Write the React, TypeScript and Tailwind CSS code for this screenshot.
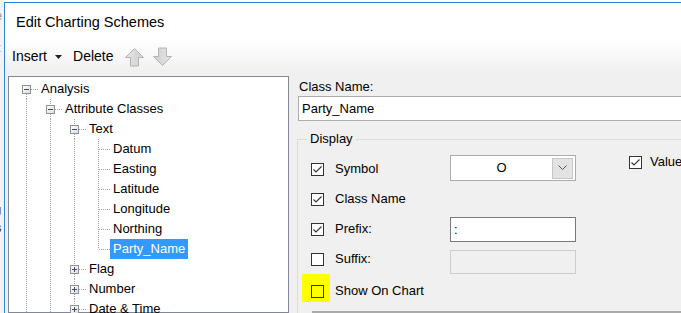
import React from 'react';

type Kind = 'minus' | 'plus' | 'leaf';

interface TreeRow {
  label: string;
  level: number;
  kind: Kind;
  top: boolean;
  bottom: boolean;
  selected?: boolean;
}

const rows: TreeRow[] = [
  { label: 'Analysis', level: 0, kind: 'minus', top: false, bottom: true },
  { label: 'Attribute Classes', level: 1, kind: 'minus', top: true, bottom: true },
  { label: 'Text', level: 2, kind: 'minus', top: true, bottom: true },
  { label: 'Datum', level: 3, kind: 'leaf', top: true, bottom: true },
  { label: 'Easting', level: 3, kind: 'leaf', top: true, bottom: true },
  { label: 'Latitude', level: 3, kind: 'leaf', top: true, bottom: true },
  { label: 'Longitude', level: 3, kind: 'leaf', top: true, bottom: true },
  { label: 'Northing', level: 3, kind: 'leaf', top: true, bottom: true },
  { label: 'Party_Name', level: 3, kind: 'leaf', top: true, bottom: false, selected: true },
  { label: 'Flag', level: 2, kind: 'plus', top: true, bottom: true },
  { label: 'Number', level: 2, kind: 'plus', top: true, bottom: true },
  { label: 'Date & Time', level: 2, kind: 'plus', top: true, bottom: true },
];

const DOT = '#a0a0a0';

// a 24x20 cell with the dotted connector lines of a tree row
function LineCell({ row, own }: { row?: TreeRow; own: boolean }) {
  if (!own) {
    return (
      <svg width="24" height="20" className="shrink-0">
        <line x1="12.5" y1="0" x2="12.5" y2="20" stroke={DOT} strokeDasharray="1 1" />
      </svg>
    );
  }
  const r = row!;
  const leaf = r.kind === 'leaf';
  return (
    <svg width="24" height="20" className="shrink-0">
      <defs>
        <linearGradient id="bx" x1="0" y1="0" x2="1" y2="1">
          <stop offset="0" stopColor="#ffffff" />
          <stop offset="1" stopColor="#dcdcdc" />
        </linearGradient>
      </defs>
      {r.top && (
        <line x1="12.5" y1="0" x2="12.5" y2={leaf ? 10 : 6} stroke={DOT} strokeDasharray="1 1" />
      )}
      {r.bottom && (
        <line x1="12.5" y1={leaf ? 10 : 15} x2="12.5" y2="20" stroke={DOT} strokeDasharray="1 1" />
      )}
      <line x1={leaf ? 13 : 17} y1="10.5" x2="24" y2="10.5" stroke={DOT} strokeDasharray="1 1" />
      {!leaf && (
        <>
          <rect x="8.5" y="6.5" width="8" height="8" fill="url(#bx)" stroke="#919191" />
          <line x1="10" y1="10.5" x2="15" y2="10.5" stroke="#3d4f6b" />
          {r.kind === 'plus' && <line x1="12.5" y1="8" x2="12.5" y2="13" stroke="#3d4f6b" />}
        </>
      )}
    </svg>
  );
}

function Tree() {
  return (
    <div className="w-[281px] shrink-0 border border-[#828790] bg-white pt-[2px] pl-[5px] text-[13px] leading-[20px]">
      {rows.map((r) => (
        <div key={r.label} className="flex h-[20px]">
          {Array.from({ length: r.level }).map((_, i) => (
            <LineCell key={i} own={false} />
          ))}
          <LineCell row={r} own />
          <span
            className={`px-[3px] whitespace-nowrap ${r.selected ? 'bg-[#3399ff] text-white' : 'text-black'}`}
          >
            {r.label}
          </span>
        </div>
      ))}
    </div>
  );
}

function CheckBox({ checked, clear }: { checked?: boolean; clear?: boolean }) {
  return (
    <span
      className={`w-[13px] h-[13px] shrink-0 border border-[#333333] flex items-center justify-center ${clear ? 'bg-transparent' : 'bg-white'}`}
    >
      {checked && (
        <svg width="11" height="11" viewBox="0 0 11 11">
          <polyline points="1.5,5.5 4,8 9.5,2.5" fill="none" stroke="#333333" strokeWidth="1.1" />
        </svg>
      )}
    </span>
  );
}

function Arrow({ down }: { down?: boolean }) {
  return (
    <svg width="21" height="20" viewBox="0 0 21 20" className={down ? 'rotate-180' : ''}>
      <defs>
        <linearGradient id={down ? 'ad' : 'au'} x1="0" y1="0" x2="1" y2="0">
          <stop offset="0" stopColor="#e6e6e6" />
          <stop offset="1" stopColor="#cfcfcf" />
        </linearGradient>
      </defs>
      <polygon
        points="10.5,1.5 19.5,10.5 14.5,10.5 14.5,19 6.5,19 6.5,10.5 1.5,10.5"
        fill={`url(#${down ? 'ad' : 'au'})`}
        stroke="#b4b4b4"
        strokeLinejoin="round"
      />
    </svg>
  );
}

export default function App() {
  return (
    <div className="w-[681px] h-[313px] overflow-hidden bg-white flex flex-col font-['Liberation_Sans',Arial,sans-serif] text-black">
      <div className="h-[2px] shrink-0 bg-white" />
      <div className="flex flex-1 min-h-0">
        {/* window behind the dialog */}
        <div className="w-[4px] shrink-0 bg-[#f3f3f3] overflow-hidden text-[13px] leading-[16px] -mt-[2px]">
          <div className="h-[8px]" />
          <div className="-ml-[5px] text-[#9a9a9a]">e</div>
          <div className="h-[16px]" />
          <div className="-ml-[4px] font-bold text-[#333]">t</div>
          <div className="h-[148px]" />
          <div className="-ml-[5px] text-[#6b5a2a]">J</div>
          <div className="-ml-[5px] text-[#333]">s</div>
        </div>

        <div className="flex-1 min-w-0 flex flex-col border-l border-t border-[#2b86d9]">
          {/* title bar */}
          <div className="h-[37px] shrink-0 bg-white flex items-center pl-[11px] pt-[2px] text-[14.5px]">
            Edit Charting Schemes
          </div>

          {/* toolbar */}
          <div className="h-[33px] shrink-0 bg-gradient-to-b from-white to-[#f0f0f0] flex items-center pl-[7px] text-[14px]">
            <span>Insert</span>
            <svg width="7" height="4" viewBox="0 0 7 4" className="ml-[8px] mt-[1px]">
              <polygon points="0,0 7,0 3.5,4" fill="#222" />
            </svg>
            <span className="ml-[11px]">Delete</span>
            <span className="ml-[11px] flex">
              <Arrow />
            </span>
            <span className="ml-[7px] flex">
              <Arrow down />
            </span>
          </div>

          {/* body */}
          <div className="flex-1 min-h-0 bg-[#f0f0f0] flex pl-[3px] pt-[3px] gap-[8px]">
            <Tree />

            <div className="flex-1 min-w-0 flex flex-col text-[13px]">
              <div className="mt-[3px] ml-[2px] leading-[16px] whitespace-nowrap">Class Name:</div>
              <div className="mt-[1px] ml-[1px] h-[25px] w-[420px] shrink-0 bg-white border border-[#adadad] flex items-center pl-[3px]">
                Party_Name
              </div>

              {/* Display group */}
              <div className="relative mt-[18px] border-l border-t border-[#dcdcdc] w-[420px] flex-1 pt-[14px] pl-[13px]">
                <span className="absolute -top-[9px] left-[9px] bg-[#f0f0f0] px-[3px] leading-[16px]">
                  Display
                </span>

                <div className="flex h-[30px]">
                  <div className="flex items-center h-[30px] w-[139px] shrink-0">
                    <CheckBox checked />
                    <span className="ml-[11px]">Symbol</span>
                  </div>
                  <div className="mt-[1px] w-[126px] h-[26px] shrink-0 bg-white border border-[#adadad] flex items-center">
                    <span className="flex-1 text-center">O</span>
                    <span className="w-[21px] h-[21px] mr-[2px] bg-[#e3e3e3] border border-[#c6c6c6] flex items-center justify-center">
                      <svg width="9" height="6" viewBox="0 0 9 6">
                        <polyline points="0.5,0.5 4.5,4.5 8.5,0.5" fill="none" stroke="#555" />
                      </svg>
                    </span>
                  </div>
                  <div className="ml-[53px] mt-[1px] flex items-center h-[14px]">
                    <CheckBox checked />
                    <span className="ml-[8px]">Value</span>
                  </div>
                </div>

                <div className="flex items-center h-[30px]">
                  <CheckBox checked />
                  <span className="ml-[11px]">Class Name</span>
                </div>

                <div className="flex h-[30px]">
                  <div className="flex items-center h-[30px] w-[139px] shrink-0">
                    <CheckBox checked />
                    <span className="ml-[11px]">Prefix:</span>
                  </div>
                  <div className="mt-[3px] w-[126px] h-[25px] shrink-0 bg-white border border-[#7a7a7a] flex items-center pl-[3px]">
                    :
                  </div>
                </div>

                <div className="flex h-[30px]">
                  <div className="flex items-center h-[30px] w-[139px] shrink-0">
                    <CheckBox />
                    <span className="ml-[11px]">Suffix:</span>
                  </div>
                  <div className="mt-[6px] w-[126px] h-[24px] shrink-0 bg-[#f0f0f0] border border-[#cccccc]" />
                </div>

                <div className="flex items-center h-[30px] mt-[2px]">
                  <span className="relative flex">
                    <span className="absolute -left-[9px] -top-[11px] w-[28px] h-[28px] bg-[#ffff00]" />
                    <span className="relative flex">
                      <CheckBox clear />
                    </span>
                  </span>
                  <span className="ml-[11px]">Show On Chart</span>
                </div>

                <div className="mt-[5px] ml-[1px] h-[4px] border-t-2 border-l border-[#ababab]" />
              </div>
            </div>
          </div>
        </div>
      </div>
    </div>
  );
}
